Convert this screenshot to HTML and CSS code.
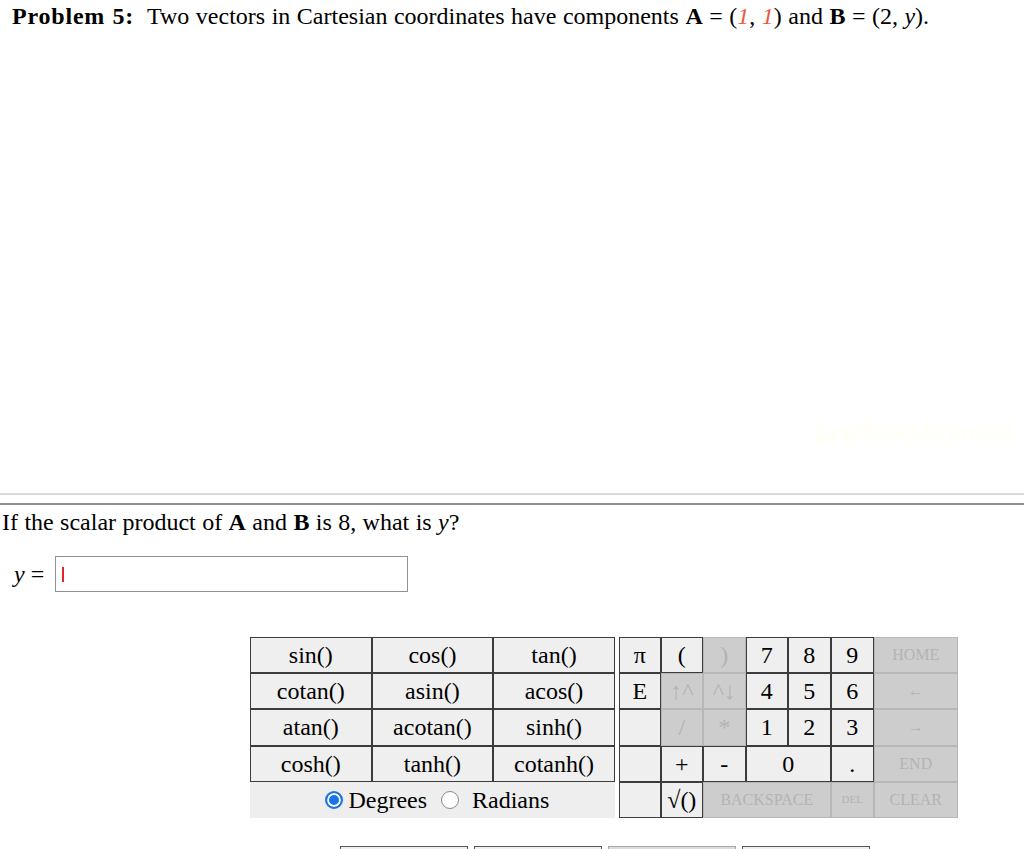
FILE: index.html
```html
<!DOCTYPE html>
<html>
<head>
<meta charset="utf-8">
<link rel="stylesheet" href="styles.css">
</head>
<body>
<div class="problem">
  <div class="title"><b class="plabel">Problem 5:</b><span class="ptext">Two vectors in Cartesian coordinates have components <b>A</b> = (<i class="red">1</i>, <i class="red">1</i>) and <b>B</b> = (2, <i>y</i>).</span></div>
  <div class="figure"><span class="watermark">braff0004@mail.</span></div>
</div>
<div class="rule-light"></div>
<div class="rule-dark"></div>
<p class="question">If the scalar product of <b>A</b> and <b>B</b> is 8, what is <i>y</i>?</p>
<div class="answer">
  <span class="lbl"><i>y</i> =</span>
  <div class="input"><span class="caret"></span></div>
</div>
<div class="keypad">
  <div class="trig">
    <div class="key">sin()</div><div class="key">cos()</div><div class="key">tan()</div>
    <div class="key">cotan()</div><div class="key">asin()</div><div class="key">acos()</div>
    <div class="key">atan()</div><div class="key">acotan()</div><div class="key">sinh()</div>
    <div class="key">cosh()</div><div class="key">tanh()</div><div class="key">cotanh()</div>
    <div class="mode">
      <span class="radio on"></span><span class="mlabel">Degrees</span>
      <span class="radio"></span><span class="mlabel">Radians</span>
    </div>
  </div>
  <div class="nums">
    <div class="key">π</div><div class="key">(</div><div class="key off">)</div><div class="key">7</div><div class="key">8</div><div class="key">9</div><div class="key off small">HOME</div>
    <div class="key">E</div><div class="key off">↑^</div><div class="key off">^↓</div><div class="key">4</div><div class="key">5</div><div class="key">6</div><div class="key off small">←</div>
    <div class="key"></div><div class="key off">/</div><div class="key off">*</div><div class="key">1</div><div class="key">2</div><div class="key">3</div><div class="key off small">→</div>
    <div class="key"></div><div class="key">+</div><div class="key">-</div><div class="key span2">0</div><div class="key">.</div><div class="key off small">END</div>
    <div class="key"></div><div class="key">√()</div><div class="key off small span3">BACKSPACE</div><div class="key off tiny">DEL</div><div class="key off small">CLEAR</div>
  </div>
</div>
<div class="actions">
  <div class="abtn"></div>
  <div class="abtn"></div>
  <div class="abtn dim"></div>
  <div class="abtn"></div>
</div>
</body>
</html>
```

FILE: styles.css
```css
html, body {
  margin: 0;
  padding: 0;
  background: #ffffff;
  overflow: hidden;
}
body {
  font-family: "Liberation Serif", "Times New Roman", serif;
  font-size: 24px;
  color: #000;
  width: 1024px;
  height: 849px;
}
.problem {
  position: relative;
}
.title {
  padding: 2px 0 0 12px;
  line-height: 28px;
  white-space: nowrap;
  word-spacing: 0.5px;
}
.plabel {
  letter-spacing: 0.8px;
  margin-right: 13px;
}
.red {
  color: #ea5a3d;
}
.figure {
  height: 463px;
  position: relative;
}
.watermark {
  position: absolute;
  left: 815px;
  top: 388px;
  font-family: "Liberation Sans", Arial, sans-serif;
  font-size: 28px;
  color: #fffff4;
  white-space: nowrap;
}
.rule-light {
  height: 2px;
  background: #dadada;
}
.rule-dark {
  height: 2px;
  margin-top: 8px;
  background: #909090;
}
.question {
  margin: 3px 0 0 0;
  padding-left: 2px;
  line-height: 28px;
  word-spacing: 0.4px;
}
.answer {
  display: flex;
  align-items: center;
  margin-top: 20px;
  padding-left: 14px;
}
.lbl {
  width: 41px;
  line-height: 28px;
}
.input {
  width: 345px;
  height: 34px;
  border: 1px solid #939393;
  display: flex;
  align-items: center;
  padding-left: 6px;
  box-sizing: content-box;
}
.caret {
  width: 2px;
  height: 15px;
  background: #e3262b;
}
.keypad {
  display: flex;
  gap: 4px;
  margin: 45px 0 0 250px;
}
.trig {
  display: grid;
  grid-template-columns: repeat(3, 121.6px);
  grid-auto-rows: 36.2px;
}
.nums {
  display: grid;
  grid-template-columns: 42px 42px 43px 42px 43px 43px 84px;
  grid-auto-rows: 36.2px;
}
.key {
  box-sizing: border-box;
  border: 1px solid #3c3c3c;
  background: #efefef;
  display: flex;
  align-items: center;
  justify-content: center;
  line-height: 1;
  white-space: nowrap;
}
.key.off {
  background: #cdcdcd;
  border-color: #b7b7b7;
  color: #b3b3b3;
}
.key.small {
  font-size: 16px;
}
.key.tiny {
  font-size: 11px;
}
.span2 {
  grid-column: span 2;
}
.span3 {
  grid-column: span 3;
}
.mode {
  grid-column: 1 / -1;
  background: #eeeeee;
  display: flex;
  align-items: center;
  justify-content: center;
  padding-left: 10px;
}
.radio {
  box-sizing: border-box;
  width: 18px;
  height: 18px;
  border-radius: 50%;
  border: 1px solid #8a8a8a;
  background: #fff;
  margin-right: 13px;
}
.radio.on {
  border: 2px solid #1a73e8;
  background: #1a73e8;
  box-shadow: inset 0 0 0 2px #fff;
  margin-right: 5px;
}
.mlabel {
  line-height: 28px;
}
.mlabel + .radio {
  margin-left: 14px;
}
.actions {
  display: flex;
  gap: 6px;
  margin: 28px 0 0 340px;
}
.abtn {
  box-sizing: border-box;
  width: 128px;
  height: 36px;
  border: 1px solid #555;
  background: #f0f0f0;
}
.abtn.dim {
  border-color: #a8a8a8;
  background: #dcdcdc;
}
```
